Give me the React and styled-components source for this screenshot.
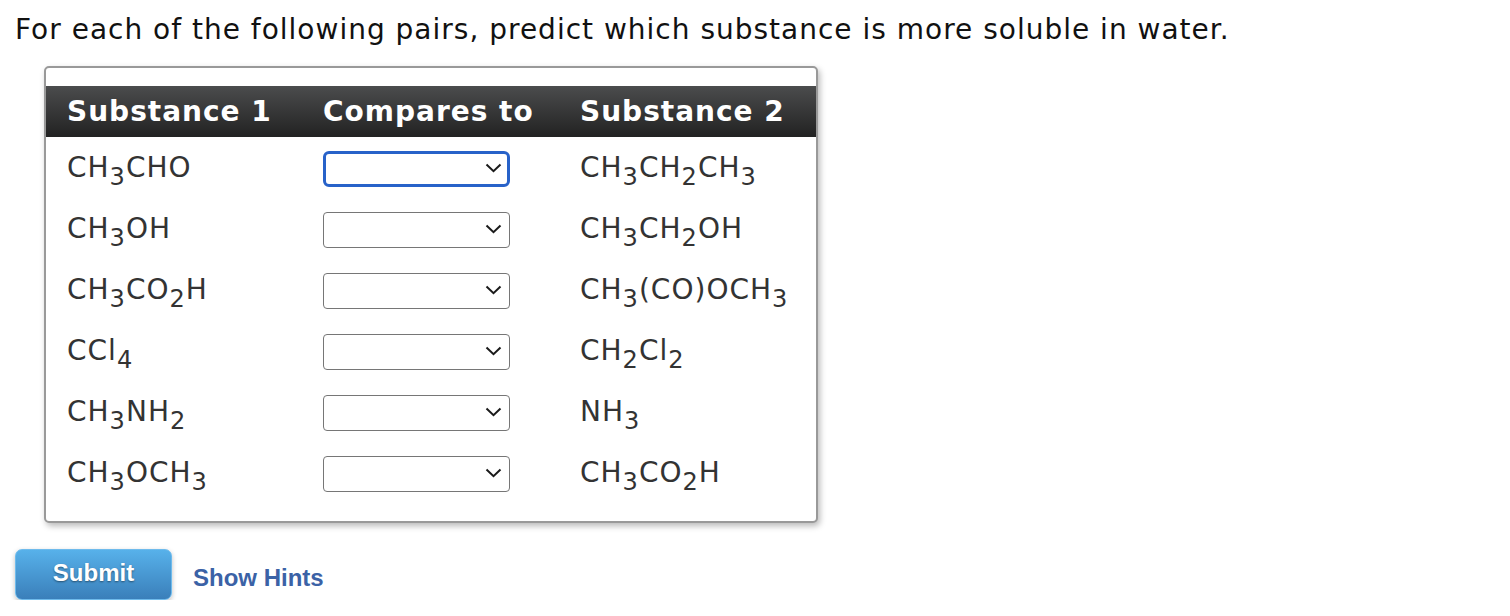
import React from 'react';
import styled, { createGlobalStyle } from 'styled-components';

const GlobalStyle = createGlobalStyle`
  body {
    margin: 0;
    background: #fff;
    font-family: "DejaVu Sans", Verdana, sans-serif;
  }
`;

const Page = styled.div`
  padding: 13px 0 0 15px;
`;

const Prompt = styled.p`
  margin: 0 0 20px;
  font-size: 28px;
  line-height: 33px;
  letter-spacing: 1px;
  color: #111;
`;

const Card = styled.div`
  margin-left: 29px;
  width: 770px;
  padding: 18px 0 18px;
  border: 2px solid #999;
  border-radius: 5px;
  box-shadow: 2px 3px 6px rgba(0, 0, 0, 0.28);
  background: #fff;
`;

const Grid = styled.div`
  display: grid;
  grid-template-columns: 256px 257px 257px;
`;

const HeadCell = styled.div`
  height: 51px;
  display: flex;
  align-items: center;
  padding-left: 21px;
  background: linear-gradient(#4b4c4d, #222);
  color: #fff;
  font-weight: bold;
  font-size: 28px;
  letter-spacing: 1px;
`;

const Cell = styled.div`
  height: 61px;
  display: flex;
  align-items: center;
  padding-left: 21px;
  font-size: 28px;
  letter-spacing: 1px;
  color: #333;
  white-space: nowrap;
`;

const Formula = styled.span`
  line-height: 1;
`;

const Sub = styled.sub`
  font-size: 0.86em;
  vertical-align: -8px;
  line-height: 0;
`;

const SelectWrap = styled.div`
  position: relative;
  width: 187px;
  height: 36px;
`;

const Select = styled.select`
  appearance: none;
  box-sizing: border-box;
  width: 100%;
  height: 100%;
  margin: 0;
  background: #fff;
  border: ${(p) => (p.$focused ? '3px solid #2862c9' : '1.5px solid #767676')};
  border-radius: ${(p) => (p.$focused ? '6px' : '4px')};
  outline: none;
  font-size: 20px;
`;

const Chevron = styled.svg`
  position: absolute;
  right: 8px;
  top: 13px;
  pointer-events: none;
`;

const Actions = styled.div`
  display: flex;
  align-items: center;
  gap: 21px;
  margin-top: 26px;
  font-family: "Liberation Sans", Arial, sans-serif;
`;

const SubmitButton = styled.button`
  width: 157px;
  height: 51px;
  border: 1px solid #6fbbec;
  border-radius: 7px;
  background: linear-gradient(#57b1ea, #3a7fba);
  box-shadow: 0 2px 5px rgba(0, 0, 0, 0.25);
  color: #fff;
  font-family: inherit;
  font-weight: bold;
  font-size: 24px;
  text-shadow: 0 1px 2px rgba(0, 0, 0, 0.45);
  padding: 0 0 4px;
`;

const HintLink = styled.span`
  color: #3b62a6;
  font-weight: bold;
  font-size: 24px;
  margin-top: 6px;
`;

const f = (parts) => (
  <Formula>
    {parts.map((p, i) => (typeof p === 'number' ? <Sub key={i}>{p}</Sub> : <span key={i}>{p}</span>))}
  </Formula>
);

const rows = [
  [['CH', 3, 'CHO'], ['CH', 3, 'CH', 2, 'CH', 3]],
  [['CH', 3, 'OH'], ['CH', 3, 'CH', 2, 'OH']],
  [['CH', 3, 'CO', 2, 'H'], ['CH', 3, '(CO)OCH', 3]],
  [['CCl', 4], ['CH', 2, 'Cl', 2]],
  [['CH', 3, 'NH', 2], ['NH', 3]],
  [['CH', 3, 'OCH', 3], ['CH', 3, 'CO', 2, 'H']],
];

export default function App() {
  return (
    <Page>
      <GlobalStyle />
      <Prompt>For each of the following pairs, predict which substance is more soluble in water.</Prompt>
      <Card>
        <Grid>
          <HeadCell>Substance 1</HeadCell>
          <HeadCell>Compares to</HeadCell>
          <HeadCell>Substance 2</HeadCell>
          {rows.map(([a, b], i) => (
            <React.Fragment key={i}>
              <Cell>{f(a)}</Cell>
              <Cell>
                <SelectWrap>
                  <Select $focused={i === 0} defaultValue="">
                    <option value=""></option>
                    <option value="gt">is more soluble than</option>
                    <option value="lt">is less soluble than</option>
                  </Select>
                  <Chevron width="17" height="10" viewBox="0 0 17 10">
                    <path d="M1.5 1.5 L8.5 8.2 L15.5 1.5" fill="none" stroke="#1a1a1a" strokeWidth="2" />
                  </Chevron>
                </SelectWrap>
              </Cell>
              <Cell>{f(b)}</Cell>
            </React.Fragment>
          ))}
        </Grid>
      </Card>
      <Actions>
        <SubmitButton>Submit</SubmitButton>
        <HintLink>Show Hints</HintLink>
      </Actions>
    </Page>
  );
}
